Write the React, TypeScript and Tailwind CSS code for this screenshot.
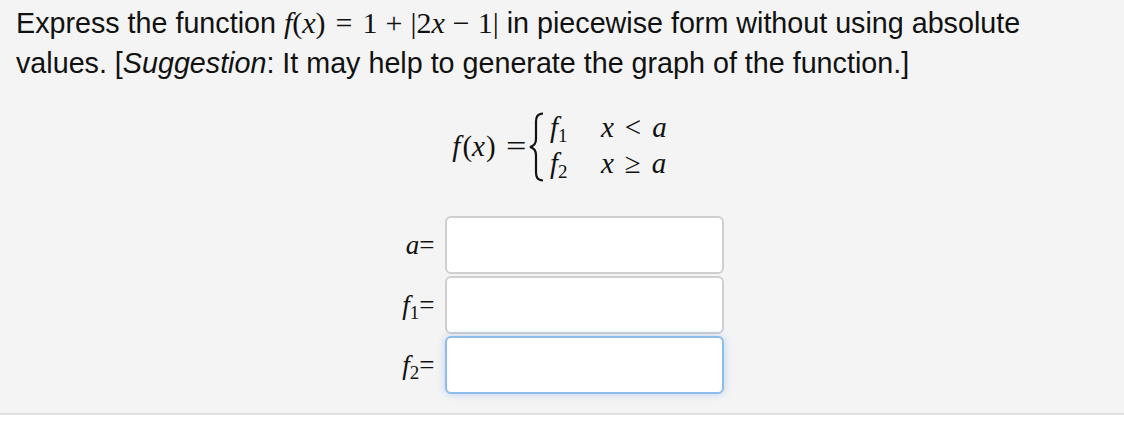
import React from 'react'

const sans = { fontFamily: '"Liberation Sans", Arial, sans-serif' }
const serif = { fontFamily: '"Liberation Serif", "Times New Roman", serif' }

function V({ children }: { children: React.ReactNode }) {
  return <span className="italic">{children}</span>
}

// operator with katex-like spacing
function Op({ children, w = 6 }: { children: React.ReactNode; w?: number }) {
  return <span style={{ margin: `0 ${w}px` }}>{children}</span>
}

function Sub({ n }: { n: string }) {
  return <span className="relative top-[5px] text-[19px]">{n}</span>
}

function Brace() {
  return (
    <svg width="15" height="70" viewBox="0 0 15 70" className="ml-[5px] mr-[6px]">
      <path
        d="M14 1.5 C8 2 7 5 7 10 L7 27 C7 32 5 34 1 35 C5 36 7 38 7 43 L7 60 C7 65 8 68 14 68.5"
        fill="none"
        stroke="#111"
        strokeWidth="2.2"
      />
    </svg>
  )
}

function Row({ label, focused }: { label: React.ReactNode; focused?: boolean }) {
  return (
    <div className="flex items-center">
      <div className="w-[55px] text-right text-[27px] text-[#111]" style={serif}>
        {label}
      </div>
      <div
        className={
          focused
            ? 'ml-[10px] h-[58px] w-[279px] rounded-[6px] border-2 border-[#8cbbec] bg-white shadow-[0_0_8px_rgba(120,170,230,0.45)]'
            : 'ml-[10px] h-[58px] w-[279px] rounded-[6px] border-2 border-[#cfcfcf] bg-white'
        }
      />
    </div>
  )
}

export default function App() {
  return (
    <div className="w-[1124px] bg-white">
      <div className="h-[415px] border-b-2 border-[#e0e0e0] bg-[#f4f4f4] pt-[3px] pl-[16px] pr-[15px]">
        <p className="text-[28.7px] leading-[40px] text-[#111]" style={sans}>
          Express the function{' '}
          <span style={serif} className="text-[30px]">
            <V>f</V>(<V>x</V>)<Op w={10}>=</Op>1<Op w={8}>+</Op>|2<V>x</V>
            <Op w={8}>−</Op>1|
          </span>{' '}
          in piecewise form without using absolute
          <br />
          values. [<span className="italic">Suggestion</span>: It may help to generate the graph of the function.]
        </p>

        <div className="mt-[28px] flex items-center justify-center pr-[6px] text-[29px] text-[#111]" style={serif}>
          <span>
            <V>f</V>
            <span className="ml-[2px]">(</span>
            <V>x</V>
            <span className="ml-[1px]">)</span>
            <span className="ml-[12px] inline-block scale-x-125">=</span>
          </span>
          <Brace />
          <div className="flex flex-col leading-[33px]">
            <div className="flex">
              <span className="w-[51px]">
                <V>f</V>
                <Sub n="1" />
              </span>
              <span>
                <V>x</V>
                <Op w={11}>&lt;</Op>
                <V>a</V>
              </span>
            </div>
            <div className="flex">
              <span className="w-[51px]">
                <V>f</V>
                <Sub n="2" />
              </span>
              <span>
                <V>x</V>
                <Op w={11}>≥</Op>
                <V>a</V>
              </span>
            </div>
          </div>
        </div>

        <div className="mt-[33px] flex flex-col items-center gap-[2px] pr-[22px]">
          <Row label={<><V>a</V>=</>} />
          <Row
            label={
              <>
                <V>f</V>
                <Sub n="1" />=
              </>
            }
          />
          <Row
            label={
              <>
                <V>f</V>
                <Sub n="2" />=
              </>
            }
            focused
          />
        </div>
      </div>
    </div>
  )
}
